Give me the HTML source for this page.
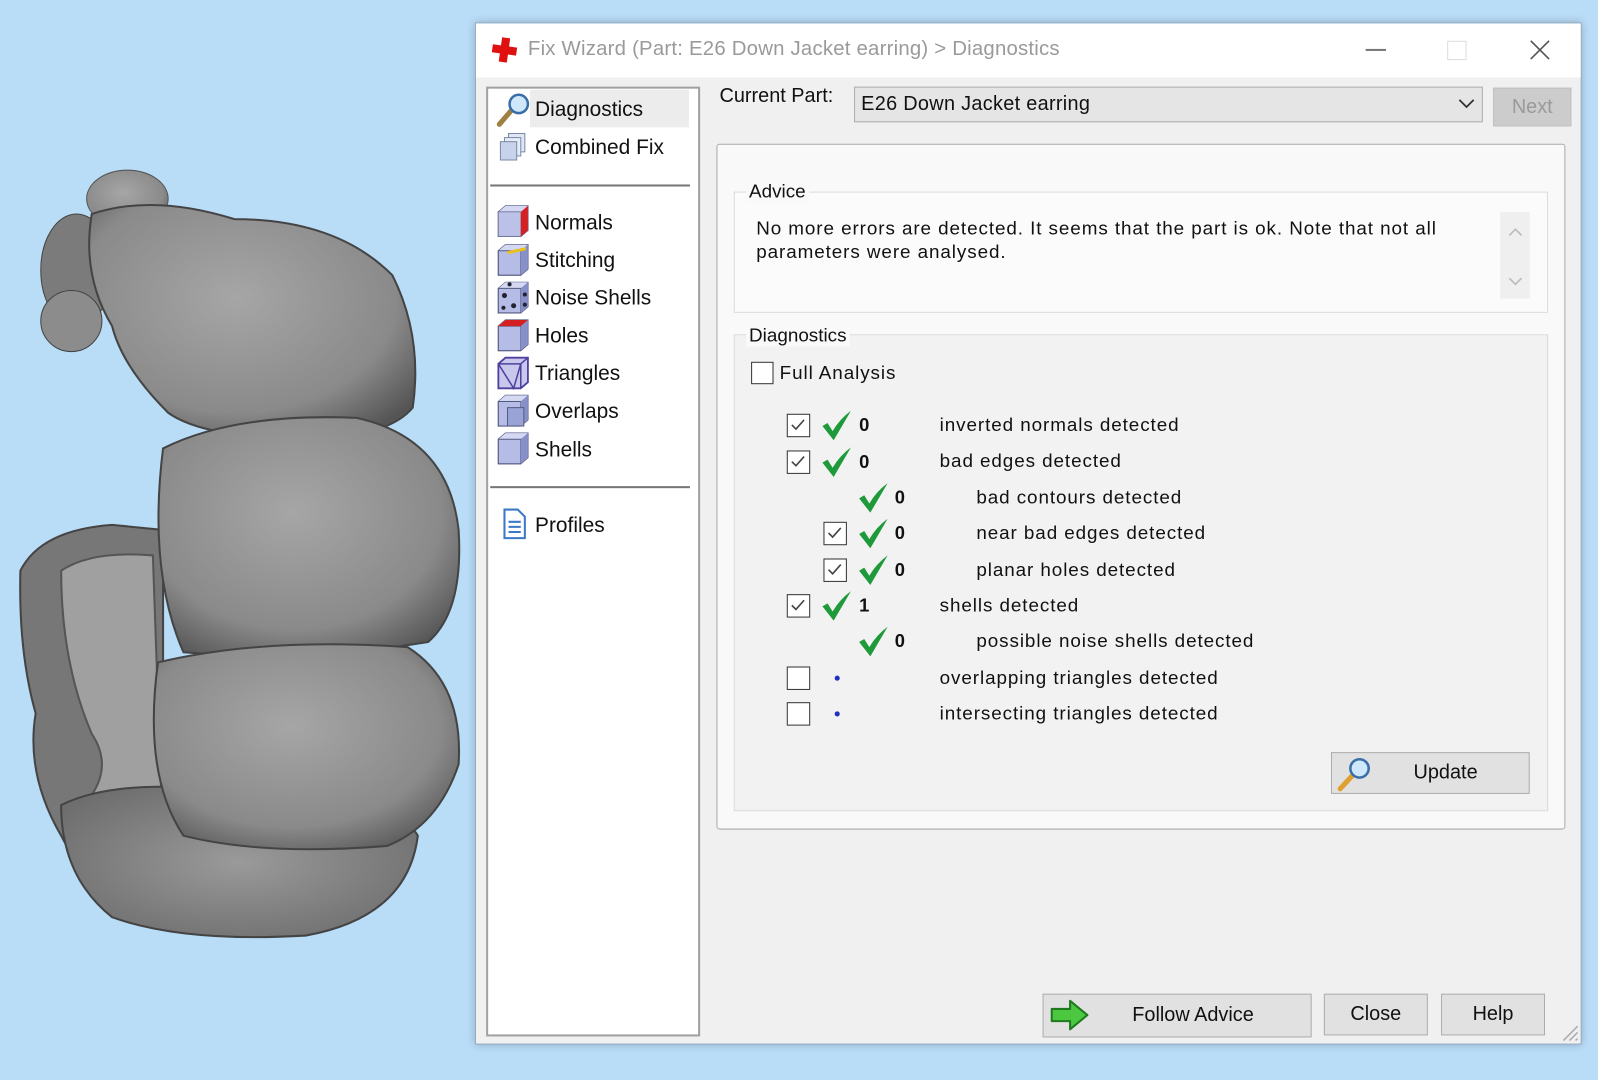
<!DOCTYPE html>
<html><head><meta charset="utf-8">
<style>
html,body{margin:0;padding:0;}
body{width:1598px;height:1080px;overflow:hidden;background:#b9dcf7;font-family:"Liberation Sans",sans-serif;}
#s{position:absolute;left:0;top:0;width:1568px;height:1060px;transform:scale(1.01913);transform-origin:0 0;}
.a{position:absolute;}
.t{position:absolute;font-size:19.5px;color:#111;white-space:nowrap;}
.d{letter-spacing:0.9px;}
.btn{position:absolute;background:#e1e1e1;border:1px solid #adadad;box-sizing:border-box;font-size:19.5px;color:#111;}
.cb{position:absolute;width:20px;height:20px;border:1.5px solid #333;background:#fff;box-sizing:border-box;}
.cb svg{position:absolute;left:2px;top:2px;}
.ck{position:absolute;}
.num{position:absolute;font-size:18px;font-weight:bold;color:#111;}
</style></head><body>
<div id="s">
<svg class="a" style="left:0;top:0" width="470" height="1060">
<defs>
<radialGradient id="g1" cx="0.45" cy="0.4" r="0.7"><stop offset="0" stop-color="#a6a6a6"/><stop offset="0.7" stop-color="#8a8a8a"/><stop offset="1" stop-color="#555"/></radialGradient>
<radialGradient id="g2" cx="0.5" cy="0.5" r="0.6"><stop offset="0" stop-color="#9a9a9a"/><stop offset="1" stop-color="#6e6e6e"/></radialGradient>
</defs>
<path d="M20 560 Q40 520 110 515 L160 520 L160 880 Q90 880 60 820 Q25 760 35 700 Q18 640 20 560Z" fill="#777" stroke="#444" stroke-width="2"/>
<path d="M60 560 Q90 540 150 545 L160 830 Q100 830 90 780 Q110 750 90 720 Q60 650 60 560Z" fill="#a0a0a0" stroke="#555" stroke-width="2"/>
<path d="M60 790 Q120 760 250 780 Q380 770 410 820 Q400 900 300 918 Q180 925 110 900 Q60 860 60 790Z" fill="url(#g2)" stroke="#444" stroke-width="2"/>
<ellipse cx="125" cy="195" rx="40" ry="28" fill="url(#g1)" stroke="#555"/>
<ellipse cx="75" cy="265" rx="35" ry="55" fill="#7b7b7b" stroke="#444"/>
<ellipse cx="70" cy="315" rx="30" ry="30" fill="#8c8c8c" stroke="#444"/>
<path d="M90 210 Q150 190 230 215 Q330 215 385 270 Q415 330 405 400 Q380 430 300 430 Q200 430 165 405 Q120 360 110 320 Q80 270 90 210Z" fill="url(#g1)" stroke="#444" stroke-width="2"/>
<path d="M160 440 Q230 405 350 410 Q440 430 450 520 Q455 600 420 630 Q300 650 180 640 Q145 560 160 440Z" fill="url(#g1)" stroke="#444" stroke-width="2"/>
<path d="M155 650 Q260 625 400 635 Q455 670 450 750 Q430 810 380 830 Q260 840 180 820 Q140 760 155 650Z" fill="url(#g1)" stroke="#444" stroke-width="2"/>
</svg>

<div class="a" style="left:466px;top:22px;width:1086px;height:1003px;background:#f0f0f0;border:1px solid #8aa6c0;box-sizing:border-box;box-shadow:0 0 8px rgba(0,0,0,0.25);"></div>
<div class="a" style="left:467px;top:23px;width:1084px;height:53px;background:#fff;"></div>
<svg class="a" style="left:482px;top:36px" width="26" height="26"><path d="M9 1h8v8h8v8h-8v8h-8v-8h-8v-8h8z" fill="#e01010" transform="rotate(8 13 13)"/></svg>
<div class="t" style="left:518px;top:37px;color:#9a9a9a;font-size:20px;letter-spacing:0.2px">Fix Wizard (Part: E26 Down Jacket earring) &gt; Diagnostics</div>
<div class="a" style="left:1340px;top:48px;width:20px;height:1.5px;background:#777"></div>
<div class="a" style="left:1420px;top:40px;width:17px;height:17px;border:1px solid #ddd"></div>
<svg class="a" style="left:1500px;top:38px" width="22" height="22"><path d="M2 2L20 20M20 2L2 20" stroke="#555" stroke-width="1.6"/></svg>

<div class="a" style="left:477px;top:85px;width:210px;height:932px;background:#fff;border:2px solid #a0a0a0;box-sizing:border-box;"></div>
<div class="a" style="left:520px;top:88px;width:156px;height:37px;background:#ececec"></div>
<div class="a" style="left:481px;top:181px;width:196px;height:2px;background:#777"></div>
<div class="a" style="left:481px;top:477px;width:196px;height:2px;background:#777"></div>
<svg class="a" style="left:486px;top:90px" width="36" height="36"><line x1="4" y1="32" x2="16" y2="18" stroke="#a08040" stroke-width="5" stroke-linecap="round"/><circle cx="23" cy="12" r="9" fill="#cfe7fb" stroke="#3a6ea8" stroke-width="2.5"/></svg>
<svg class="a" style="left:490px;top:129px" width="30" height="30"><rect x="9" y="2" width="16" height="18" fill="#dfe6f4" stroke="#7a8aa8"/><rect x="5" y="6" width="16" height="18" fill="#e6ecf8" stroke="#7a8aa8"/><rect x="1" y="10" width="16" height="18" fill="#c8d2ea" stroke="#7a8aa8"/></svg>
<div class="t" style="left:525px;top:96px;font-size:20.5px">Diagnostics</div>
<div class="t" style="left:525px;top:133px;font-size:20.5px">Combined Fix</div>

<svg width="0" height="0" style="position:absolute"><defs>
<symbol id="cube" viewBox="0 0 34 34"><path d="M3 8 L10 2 L32 2 L32 26 L25 32 L3 32Z" fill="#9aa3d6" stroke="#555a80" stroke-width="1.2"/><path d="M3 8 L10 2 L32 2 L25 8Z" fill="#d4d8f2"/><path d="M3 8 L25 8 L25 32 L3 32Z" fill="#b5bce6" stroke="#555a80" stroke-width="1"/><path d="M25 8 L32 2 L32 26 L25 32Z" fill="#8890c8"/></symbol>
</defs></svg>
<svg class="a" style="left:486px;top:200px" width="34" height="34"><use href="#cube"/><path d="M25 8 L32 2 L32 26 L25 32Z" fill="#d42020"/><path d="M3 8 L25 8 L25 32 L3 32Z" fill="#c0c4e8" opacity="0.6"/></svg>
<svg class="a" style="left:486px;top:238px" width="34" height="34"><use href="#cube"/><path d="M12 10 L30 6" stroke="#e8c020" stroke-width="3"/></svg>
<svg class="a" style="left:486px;top:275px" width="34" height="34"><use href="#cube"/><circle cx="9" cy="15" r="2.5" fill="#223"/><circle cx="18" cy="25" r="2.5" fill="#223"/><circle cx="14" cy="4" r="2" fill="#223"/><circle cx="29" cy="14" r="2" fill="#223"/><circle cx="29" cy="24" r="2" fill="#223"/><circle cx="8" cy="27" r="2" fill="#223"/></svg>
<svg class="a" style="left:486px;top:312px" width="34" height="34"><use href="#cube"/><path d="M3 8 L10 2 L32 2 L25 8Z" fill="#d42020"/></svg>
<svg class="a" style="left:486px;top:349px" width="34" height="34"><path d="M3 8 L10 2 L32 2 L32 26 L25 32 L3 32Z" fill="#c8c8ec" stroke="#5040a0" stroke-width="1.8"/><path d="M3 8 L25 8 L25 32M25 8 L32 2M3 8 L18 32 L25 8" stroke="#5040a0" stroke-width="1.5" fill="none"/></svg>
<svg class="a" style="left:486px;top:386px" width="34" height="34"><use href="#cube"/><path d="M12 14 L28 14 L28 32 L12 32Z" fill="#9aa3d6" stroke="#555a80"/></svg>
<svg class="a" style="left:486px;top:423px" width="34" height="34"><use href="#cube"/></svg>
<svg class="a" style="left:493px;top:498px" width="24" height="32"><path d="M2 2 L15 2 L22 9 L22 30 L2 30Z" fill="#fff" stroke="#3b78c8" stroke-width="2"/><path d="M6 14h12M6 19h12M6 24h12" stroke="#3b78c8" stroke-width="2"/></svg>
<div class="t" style="left:525px;top:207px;font-size:20.5px">Normals</div>
<div class="t" style="left:525px;top:244px;font-size:20.5px">Stitching</div>
<div class="t" style="left:525px;top:281px;font-size:20.5px">Noise Shells</div>
<div class="t" style="left:525px;top:318px;font-size:20.5px">Holes</div>
<div class="t" style="left:525px;top:355px;font-size:20.5px">Triangles</div>
<div class="t" style="left:525px;top:392px;font-size:20.5px">Overlaps</div>
<div class="t" style="left:525px;top:430px;font-size:20.5px">Shells</div>
<div class="t" style="left:525px;top:504px;font-size:20.5px">Profiles</div>

<div class="t" style="left:706px;top:83px">Current Part:</div>
<div class="a" style="left:838px;top:85px;width:617px;height:35px;background:#e5e5e5;border:1px solid #adadad;box-sizing:border-box"></div>
<div class="t" style="left:845px;top:91px;letter-spacing:0.3px">E26 Down Jacket earring</div>
<svg class="a" style="left:1430px;top:96px" width="18" height="12"><path d="M2 2 L9 9 L16 2" stroke="#333" stroke-width="1.8" fill="none"/></svg>
<div class="btn" style="left:1465px;top:86px;width:77px;height:38px;background:#ccc;border-color:#bfbfbf;color:#9a9a9a;text-align:center;line-height:36px">Next</div>

<div class="a" style="left:703px;top:141px;width:833px;height:673px;background:#f9f9f9;border:1.5px solid #aaa;border-radius:3px;box-sizing:border-box"></div>
<div class="a" style="left:720px;top:188px;width:799px;height:119px;border:1px solid #dcdcdc;background:#fbfbfb;box-sizing:border-box"></div>
<div class="t" style="left:732px;top:177px;background:#f9f9f9;padding:0 3px;font-size:18.5px">Advice</div>
<div class="t d" style="left:742px;top:212px;font-size:18.5px;line-height:23px">No more errors are detected. It seems that the part is ok. Note that not all<br>parameters were analysed.</div>
<div class="a" style="left:1472px;top:208px;width:29px;height:85px;background:#efefef"></div>
<svg class="a" style="left:1478px;top:220px" width="18" height="70"><path d="M3 11 L9 5 L15 11M3 53 L9 59 L15 53" stroke="#bbb" stroke-width="1.6" fill="none"/></svg>

<div class="a" style="left:720px;top:328px;width:799px;height:468px;border:1px solid #dcdcdc;background:#f2f2f2;box-sizing:border-box"></div>
<div class="t" style="left:732px;top:318px;background:#f9f9f9;padding:0 3px;font-size:18.5px">Diagnostics</div>
<div class="cb" style="left:737px;top:355px;width:22px;height:22px"></div>
<div class="t d" style="left:765px;top:355px;font-size:18.5px">Full Analysis</div>

<svg width="0" height="0" style="position:absolute"><defs>
<symbol id="chk" viewBox="0 0 30 30"><path d="M1 15 L6 12 L11 20 Q18 8 29 0 Q22 12 12 29 Z" fill="#1e9a3a"/></symbol>
<symbol id="cbt" viewBox="0 0 16 16"><path d="M2 8 L6 12 L14 3" stroke="#444" stroke-width="1.6" fill="none"/></symbol>
</defs></svg>

<div class="cb" style="left:772px;top:406px;width:23px;height:23px"><svg width="16" height="16"><use href="#cbt"/></svg></div>
<svg class="ck" style="left:806px;top:403px" width="30" height="30"><use href="#chk"/></svg>
<div class="num" style="left:843px;top:407px">0</div>
<div class="t d" style="left:922px;top:406px;font-size:18.5px">inverted normals detected</div>

<div class="cb" style="left:772px;top:442px;width:23px;height:23px"><svg width="16" height="16"><use href="#cbt"/></svg></div>
<svg class="ck" style="left:806px;top:439px" width="30" height="30"><use href="#chk"/></svg>
<div class="num" style="left:843px;top:443px">0</div>
<div class="t d" style="left:922px;top:441px;font-size:18.5px">bad edges detected</div>

<svg class="ck" style="left:842px;top:474px" width="30" height="30"><use href="#chk"/></svg>
<div class="num" style="left:878px;top:478px">0</div>
<div class="t d" style="left:958px;top:477px;font-size:18.5px">bad contours detected</div>

<div class="cb" style="left:808px;top:512px;width:23px;height:23px"><svg width="16" height="16"><use href="#cbt"/></svg></div>
<svg class="ck" style="left:842px;top:509px" width="30" height="30"><use href="#chk"/></svg>
<div class="num" style="left:878px;top:513px">0</div>
<div class="t d" style="left:958px;top:512px;font-size:18.5px">near bad edges detected</div>

<div class="cb" style="left:808px;top:548px;width:23px;height:23px"><svg width="16" height="16"><use href="#cbt"/></svg></div>
<svg class="ck" style="left:842px;top:545px" width="30" height="30"><use href="#chk"/></svg>
<div class="num" style="left:878px;top:549px">0</div>
<div class="t d" style="left:958px;top:548px;font-size:18.5px">planar holes detected</div>

<div class="cb" style="left:772px;top:583px;width:23px;height:23px"><svg width="16" height="16"><use href="#cbt"/></svg></div>
<svg class="ck" style="left:806px;top:580px" width="30" height="30"><use href="#chk"/></svg>
<div class="num" style="left:843px;top:584px">1</div>
<div class="t d" style="left:922px;top:583px;font-size:18.5px">shells detected</div>

<svg class="ck" style="left:842px;top:615px" width="30" height="30"><use href="#chk"/></svg>
<div class="num" style="left:878px;top:619px">0</div>
<div class="t d" style="left:958px;top:618px;font-size:18.5px">possible noise shells detected</div>

<div class="cb" style="left:772px;top:654px;width:23px;height:23px"></div>
<div class="a" style="left:819px;top:663px;width:5px;height:5px;border-radius:50%;background:#2030c0"></div>
<div class="t d" style="left:922px;top:654px;font-size:18.5px">overlapping triangles detected</div>

<div class="cb" style="left:772px;top:689px;width:23px;height:23px"></div>
<div class="a" style="left:819px;top:698px;width:5px;height:5px;border-radius:50%;background:#2030c0"></div>
<div class="t d" style="left:922px;top:689px;font-size:18.5px">intersecting triangles detected</div>

<div class="btn" style="left:1306px;top:738px;width:195px;height:41px"></div>
<svg class="a" style="left:1311px;top:741px" width="36" height="36"><line x1="4" y1="33" x2="16" y2="20" stroke="#e0a030" stroke-width="5" stroke-linecap="round"/><circle cx="23" cy="13" r="9" fill="#cfe7fb" stroke="#3a6ea8" stroke-width="2.5"/></svg>
<div class="t" style="left:1387px;top:747px">Update</div>

<div class="btn" style="left:1023px;top:975px;width:264px;height:43px"></div>
<svg class="a" style="left:1030px;top:979px" width="40" height="34"><path d="M2 11 L20 11 L20 3 L37 17 L20 31 L20 23 L2 23Z" fill="#4cc840" stroke="#1f7a1f" stroke-width="2" stroke-linejoin="round"/></svg>
<div class="t" style="left:1111px;top:985px">Follow Advice</div>
<div class="btn" style="left:1299px;top:975px;width:102px;height:41px;text-align:center;line-height:39px">Close</div>
<div class="btn" style="left:1414px;top:975px;width:102px;height:41px;text-align:center;line-height:39px">Help</div>
<svg class="a" style="left:1530px;top:1003px" width="20" height="20"><path d="M18 4L4 18M18 10L10 18M18 16L16 18" stroke="#aaa" stroke-width="1.5"/></svg>
</div>
</body></html>
